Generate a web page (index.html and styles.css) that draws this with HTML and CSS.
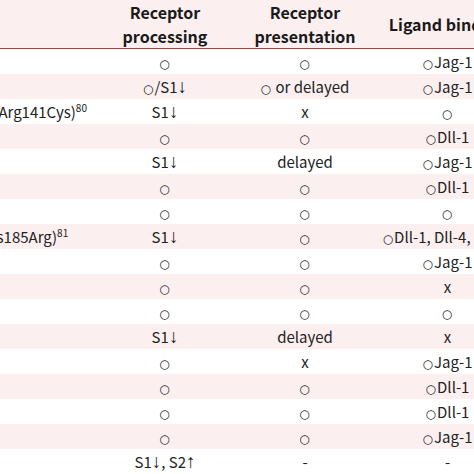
FILE: index.html
```html
<!DOCTYPE html>
<html>
<head>
<meta charset="utf-8">
<link rel="stylesheet" href="styles.css">
</head>
<body>
<div class="frame">
<table class="tbl">
<colgroup>
<col class="c1"><col class="c2"><col class="c3"><col class="c4">
</colgroup>
<thead>
<tr><th class="first">Model</th><th>Receptor<br>processing</th><th>Receptor<br>presentation</th><th>Ligand binding</th></tr>
</thead>
<tbody>
<tr><td class="first"></td><td><span class="o">○</span></td><td><span class="o">○</span></td><td><span class="o">○</span>Jag-1</td></tr>
<tr><td class="first"></td><td><span class="o">○</span>/S1<span class="ar">↓</span></td><td><span class="o">○</span> or delayed</td><td><span class="o">○</span>Jag-1</td></tr>
<tr><td class="first"><span class="pre2">Notch3 mice </span>(p.Arg141Cys)<sup>80</sup></td><td>S1<span class="ar">↓</span></td><td>x</td><td><span class="o">○</span></td></tr>
<tr><td class="first"></td><td><span class="o">○</span></td><td><span class="o">○</span></td><td><span class="o">○</span>Dll-1</td></tr>
<tr><td class="first"></td><td>S1<span class="ar">↓</span></td><td>delayed</td><td><span class="o">○</span>Jag-1</td></tr>
<tr><td class="first"></td><td><span class="o">○</span></td><td><span class="o">○</span></td><td><span class="o">○</span>Dll-1</td></tr>
<tr><td class="first"></td><td><span class="o">○</span></td><td><span class="o">○</span></td><td><span class="o">○</span></td></tr>
<tr><td class="first"><span class="pre7">Notch3 </span>(p.Cys185Arg)<sup>81</sup></td><td>S1<span class="ar">↓</span></td><td><span class="o">○</span></td><td><span class="o">○</span>Dll-1, Dll-4, Jag-1</td></tr>
<tr><td class="first"></td><td><span class="o">○</span></td><td><span class="o">○</span></td><td><span class="o">○</span>Jag-1</td></tr>
<tr><td class="first"></td><td><span class="o">○</span></td><td><span class="o">○</span></td><td>x</td></tr>
<tr><td class="first"></td><td><span class="o">○</span></td><td><span class="o">○</span></td><td><span class="o">○</span></td></tr>
<tr><td class="first"></td><td>S1<span class="ar">↓</span></td><td>delayed</td><td>x</td></tr>
<tr><td class="first"></td><td><span class="o">○</span></td><td>x</td><td><span class="o">○</span>Jag-1</td></tr>
<tr><td class="first"></td><td><span class="o">○</span></td><td><span class="o">○</span></td><td><span class="o">○</span>Dll-1</td></tr>
<tr><td class="first"></td><td><span class="o">○</span></td><td><span class="o">○</span></td><td><span class="o">○</span>Dll-1</td></tr>
<tr><td class="first"></td><td><span class="o">○</span></td><td><span class="o">○</span></td><td><span class="o">○</span>Jag-1</td></tr>
<tr><td class="first"></td><td>S1<span class="ar">↓</span>, S2<span class="ar">↑</span></td><td>-</td><td>-</td></tr>
</tbody>
</table>
</div>
</body>
</html>
```

FILE: styles.css
```css
html, body {
  margin: 0;
  padding: 0;
  background: #ffffff;
}
.frame {
  width: 474px;
  height: 474px;
  overflow: hidden;
}
.tbl {
  margin-left: -105px;
  border-collapse: collapse;
  table-layout: fixed;
  width: 625px;
  font-family: "Noto Sans CJK KR", "Noto Sans", sans-serif;
  font-size: 15px;
  color: #222222;
}
.c1 { width: 200px; }
.c2 { width: 140px; }
.c3 { width: 140px; }
.c4 { width: 145px; }
.tbl th {
  height: 48px;
  padding: 0;
  background: #fbeff0;
  border-bottom: 1px solid #9a4848;
  font-weight: bold;
  font-size: 16px;
  line-height: 24px;
  color: #1a1a1a;
  text-align: center;
  vertical-align: middle;
  white-space: nowrap;
}
.tbl th.first { color: transparent; }
.tbl td {
  height: 25px;
  padding: 0;
  line-height: 18px;
  text-align: center;
  vertical-align: middle;
  white-space: nowrap;
  overflow: visible;
}
.tbl tbody tr:nth-child(even) td {
  background: #fbeff0;
}
.tbl td.first {
  text-align: left;
  overflow: hidden;
}
.pre2 { display: inline-block; width: 85px; visibility: hidden; }
.pre7 { display: inline-block; width: 66px; visibility: hidden; }
sup {
  font-size: 10px;
  line-height: 0;
  vertical-align: 6px;
}
.o {
  font-family: "DejaVu Sans", sans-serif;
  font-size: 12px;
  line-height: 0;
  margin-right: 1px;
}
.ar {
  font-family: "Liberation Sans", sans-serif;
  font-size: 19px;
  line-height: 0;
}
```
